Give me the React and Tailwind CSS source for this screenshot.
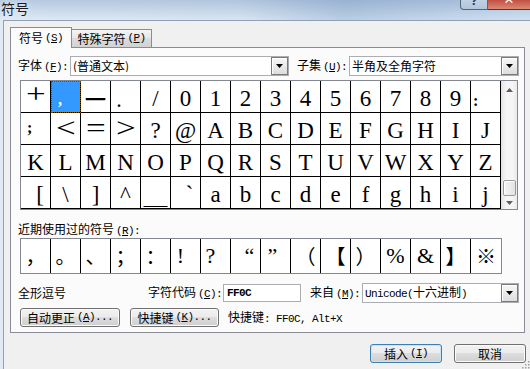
import React from "react";

const SERIF = "font-['Liberation_Serif',serif]";
const CJK = "font-['Noto_Sans_CJK_SC',sans-serif]";
const MONO = "font-['Liberation_Mono',monospace] text-[11px] tracking-[-0.6px]";

const GRID = [
  ["+", ",", "—", ".", "/", "0", "1", "2", "3", "4", "5", "6", "7", "8", "9", ":"],
  [";", "<", "=", ">", "?", "@", "A", "B", "C", "D", "E", "F", "G", "H", "I", "J"],
  ["K", "L", "M", "N", "O", "P", "Q", "R", "S", "T", "U", "V", "W", "X", "Y", "Z"],
  ["[", "\\", "]", "^", "＿", "`", "a", "b", "c", "d", "e", "f", "g", "h", "i", "j"],
];

// per-glyph placement, the fullwidth forms sit unevenly in their cells
const GLYPH = {
  "+": { span: "text-[28px] pb-[4px] inline-block scale-x-125" },
  ",": { cell: "justify-start pl-[7px]", span: "text-[16px] font-bold text-white pb-[4px]" },
  "—": { cell: "items-center", span: "text-[19px] font-bold [text-shadow:0_1px_0_#000,0_-0.5px_0_#000]" },
  ".": { cell: "justify-start pl-[6px]", span: "text-[16px] font-bold pb-[2px]" },
  ":": { cell: "justify-start pl-[2px]", span: "text-[16px] font-bold pb-[3px]" },
  ";": { cell: "justify-start pl-[6px]", span: "text-[16px] font-bold pb-[8px]" },
  "<": { span: "text-[28px] pb-[2px] inline-block scale-x-125" },
  "=": { span: "text-[28px] pb-[2px] inline-block scale-x-125" },
  ">": { span: "text-[28px] pb-[2px] inline-block scale-x-125" },
  "[": { cell: "justify-end pr-[6px]" },
  "＿": { font: CJK, span: "text-[24px] pb-[2px]" },
  "`": { cell: "pl-[8px]" },
};

const RECENT = [
  { c: "，", font: CJK },
  { c: "。", font: CJK },
  { c: "、", font: CJK },
  { c: "；", font: CJK },
  { c: "：", font: CJK },
  { c: "!", cell: "pr-[10px]" },
  { c: "?", cell: "pr-[10px]" },
  { c: "“", cell: "pl-[8px]" },
  { c: "”", cell: "pr-[6px]" },
  { c: "（", font: CJK },
  { c: "【", font: CJK },
  { c: "）", font: CJK },
  { c: "%" },
  { c: "&" },
  { c: "】", font: CJK },
  { c: "※", font: CJK },
];

function Acc({ k, tail = "" }) {
  return (
    <span className={`${MONO} ml-[2px]`}>
      (<span className="underline">{k}</span>){tail}
    </span>
  );
}

function Arrow({ dir = "down", fill = "#000" }) {
  const pts = dir === "down" ? "0,0 7,0 3.5,4" : "3.5,0 7,4 0,4";
  return (
    <svg width="7" height="4" viewBox="0 0 7 4">
      <polygon points={pts} fill={fill} />
    </svg>
  );
}

function Combo({ w, children }) {
  return (
    <div className={`${w} h-[20px] border border-[#abadb3] bg-white flex items-center`}>
      <div className="flex-1 pl-[2px] leading-none whitespace-nowrap overflow-hidden">{children}</div>
      <div className="w-[17px] h-[18px] border border-[#7a7a7a] bg-[linear-gradient(#f7f7f7,#dddddd)] shadow-[inset_1px_1px_0_#ffffff] flex items-center justify-center">
        <Arrow />
      </div>
    </div>
  );
}

function Btn({ w, primary, children }) {
  return (
    <div
      className={`${w} h-[19px] rounded-[3px] border ${
        primary
          ? "border-[#3c7fb1] shadow-[inset_0_0_0_1px_#c4e5f6]"
          : "border-[#707070] shadow-[inset_0_0_0_1px_#fbfbfb]"
      } bg-[linear-gradient(#f2f2f2_0%,#ebebeb_50%,#dddddd_50%,#cfcfcf_100%)] flex items-center justify-center leading-none whitespace-nowrap`}
    >
      {children}
    </div>
  );
}

function SymbolGrid() {
  return (
    <div className="ml-[9px] w-[498px] h-[130px] border border-[#828790] flex bg-white">
      <div className="grid grid-cols-16">
        {GRID.flat().map((ch, i) => {
          const t = GLYPH[ch] || {};
          const selected = i === 1;
          return (
            <div
              key={i}
              className={`w-[30px] h-[32px] border-r border-b border-black flex justify-center overflow-hidden ${
                t.cell || ""
              } ${t.cell && t.cell.includes("items-") ? "" : "items-end"} ${
                selected ? "bg-[#3399ff] outline-1 outline-dotted outline-[#7a4a00] outline-offset-[-1px]" : ""
              }`}
            >
              <span className={`leading-none ${t.font || SERIF} ${t.span || "text-[23px] pb-[2px]"}`}>{ch}</span>
            </div>
          );
        })}
      </div>
      <div className="w-[16px] flex flex-col border-l border-[#e2e2e2] bg-[linear-gradient(to_right,#e8e8e8,#f5f5f5_30%,#f5f5f5_70%,#eaeaea)]">
        <div className="h-[17px] flex items-center justify-center">
          <Arrow dir="up" fill="#5e5e5e" />
        </div>
        <div className="flex-1 flex flex-col justify-end px-[1px]">
          <div className="h-[16px] rounded-[2px] border border-[#9a9a9a] bg-[linear-gradient(to_right,#f4f4f4,#e3e3e3)] shadow-[inset_1px_1px_0_#ffffff]" />
        </div>
        <div className="h-[13px] flex items-center justify-center">
          <Arrow fill="#5e5e5e" />
        </div>
      </div>
    </div>
  );
}

function RecentGrid() {
  return (
    <div className="ml-[9px] w-[482px] h-[36px] border border-[#828790] flex bg-white">
      {RECENT.map((r, i) => (
        <div
          key={i}
          className={`w-[30px] h-[34px] flex justify-center ${i < 15 ? "border-r border-black" : ""} ${
            r.font ? "items-center" : "items-end"
          } ${r.cell || ""}`}
        >
          <span className={`leading-none ${r.font ? `${r.font} text-[20px]` : `${SERIF} text-[22px] pb-[6px]`}`}>
            {r.c}
          </span>
        </div>
      ))}
    </div>
  );
}

export default function App() {
  return (
    <div className="w-[530px] h-[369px] overflow-hidden relative font-['Noto_Sans_CJK_SC',sans-serif] text-[12px] text-black bg-[linear-gradient(to_bottom,rgba(120,150,190,0.35),rgba(255,255,255,0.2)_20px),linear-gradient(to_right,#d8e5f2,#cfdeee_45%,#a9c1dc_65%,#b6cce4_80%,#c6d9ec)]">
      {/* title bar */}
      <div className="h-[20px] flex justify-between">
        <div className="pl-[1px] text-[14px] leading-[17px] text-[#1b1b1b] [text-shadow:0_0_6px_#ffffff]">符号</div>
        <div className="flex h-[10px]">
          <div className="w-[28px] h-full rounded-bl-[4px] border border-t-0 border-[#52667d] bg-[linear-gradient(#c0d1e3,#b1c5db)] overflow-hidden flex justify-center">
            <span className="font-['Liberation_Sans',sans-serif] text-[14px] font-bold leading-none -mt-[7px] text-[#2d3f55]">?</span>
          </div>
          <div className="w-[42px] h-full border-b border-[#6b2b24] bg-[linear-gradient(#c24f45,#dc8a73)] overflow-hidden flex justify-center">
            <span className="font-['DejaVu_Sans',sans-serif] text-[13px] font-bold leading-none -mt-[7px] text-white">✕</span>
          </div>
        </div>
      </div>

      {/* client area */}
      <div className="ml-[3px] h-[349px] bg-[#f0f0f0] border-l border-t border-[#8fa1b6] flex flex-col">
        {/* tabs */}
        <div className="flex items-end pl-[6px] mt-[6px] h-[20px]">
          <div className="relative z-10 w-[62px] h-[21px] -mb-[1px] border border-b-0 border-[#898c95] bg-[#fbfbfb] flex items-center justify-center leading-none">
            符号<Acc k="S" />
          </div>
          <div className="w-[80px] h-[18px] border-t border-r border-[#898c95] bg-[linear-gradient(#f4f4f4,#e6e6e6_50%,#dcdcdc_50%,#d2d2d2)] flex items-center justify-center leading-none">
            特殊字符<Acc k="P" />
          </div>
        </div>

        {/* tab page */}
        <div className="ml-[6px] w-[515px] h-[286px] border border-[#898c95] bg-[#fbfbfb] flex flex-col">
          <div className="mt-[8px] h-[20px] flex items-center ml-[7px]">
            <div className="w-[52px] leading-none whitespace-nowrap">
              字体<Acc k="F" tail=":" />
            </div>
            <Combo w="w-[219px]">(普通文本)</Combo>
            <div className="ml-[8px] w-[52px] leading-none whitespace-nowrap">
              子集<Acc k="U" tail=":" />
            </div>
            <Combo w="w-[170px]">半角及全角字符</Combo>
          </div>

          <div className="mt-[4px]">
            <SymbolGrid />
          </div>

          <div className="mt-[12px] h-[14px] leading-[14px] ml-[7px] whitespace-nowrap">
            近期使用过的符号<Acc k="R" tail=":" />
          </div>

          <div className="mt-[2px]">
            <RecentGrid />
          </div>

          <div className="mt-[9px] h-[20px] flex items-center ml-[7px]">
            <div className="w-[130px] leading-none">全形逗号</div>
            <div className="w-[75px] leading-none whitespace-nowrap">
              字符代码<Acc k="C" tail=":" />
            </div>
            <div className="w-[78px] h-[18px] border border-[#abadb3] bg-white flex items-center pl-[3px]">
              <span className={`${MONO} font-bold leading-none`}>FF0C</span>
            </div>
            <div className="ml-[9px] w-[52px] leading-none whitespace-nowrap">
              来自<Acc k="M" tail=":" />
            </div>
            <Combo w="w-[157px]">
              <span className={MONO}>Unicode(</span>十六进制<span className={MONO}>)</span>
            </Combo>
          </div>

          <div className="mt-[5px] h-[19px] flex items-center ml-[9px]">
            <Btn w="w-[100px]">
              自动更正<Acc k="A" tail="..." />
            </Btn>
            <div className="ml-[10px]">
              <Btn w="w-[89px]">
                快捷键<Acc k="K" tail="..." />
              </Btn>
            </div>
            <div className="ml-[9px] leading-none whitespace-nowrap">
              快捷键<span className={MONO}>: FF0C, Alt+X</span>
            </div>
          </div>
        </div>

        {/* dialog buttons */}
        <div className="mt-[11px] flex justify-end pr-[4px] gap-[12px]">
          <Btn w="w-[72px]" primary>
            插入<Acc k="I" />
          </Btn>
          <Btn w="w-[72px]">取消</Btn>
        </div>
      </div>

      {/* size grip */}
      <svg className="absolute right-0 bottom-0" width="10" height="10" viewBox="0 0 10 10">
        {[
          [8, 2],
          [8, 5],
          [5, 5],
          [8, 8],
          [5, 8],
          [2, 8],
        ].map(([x, y], i) => (
          <rect key={i} x={x} y={y} width="1.5" height="1.5" fill="#a0a0a0" />
        ))}
      </svg>
    </div>
  );
}
